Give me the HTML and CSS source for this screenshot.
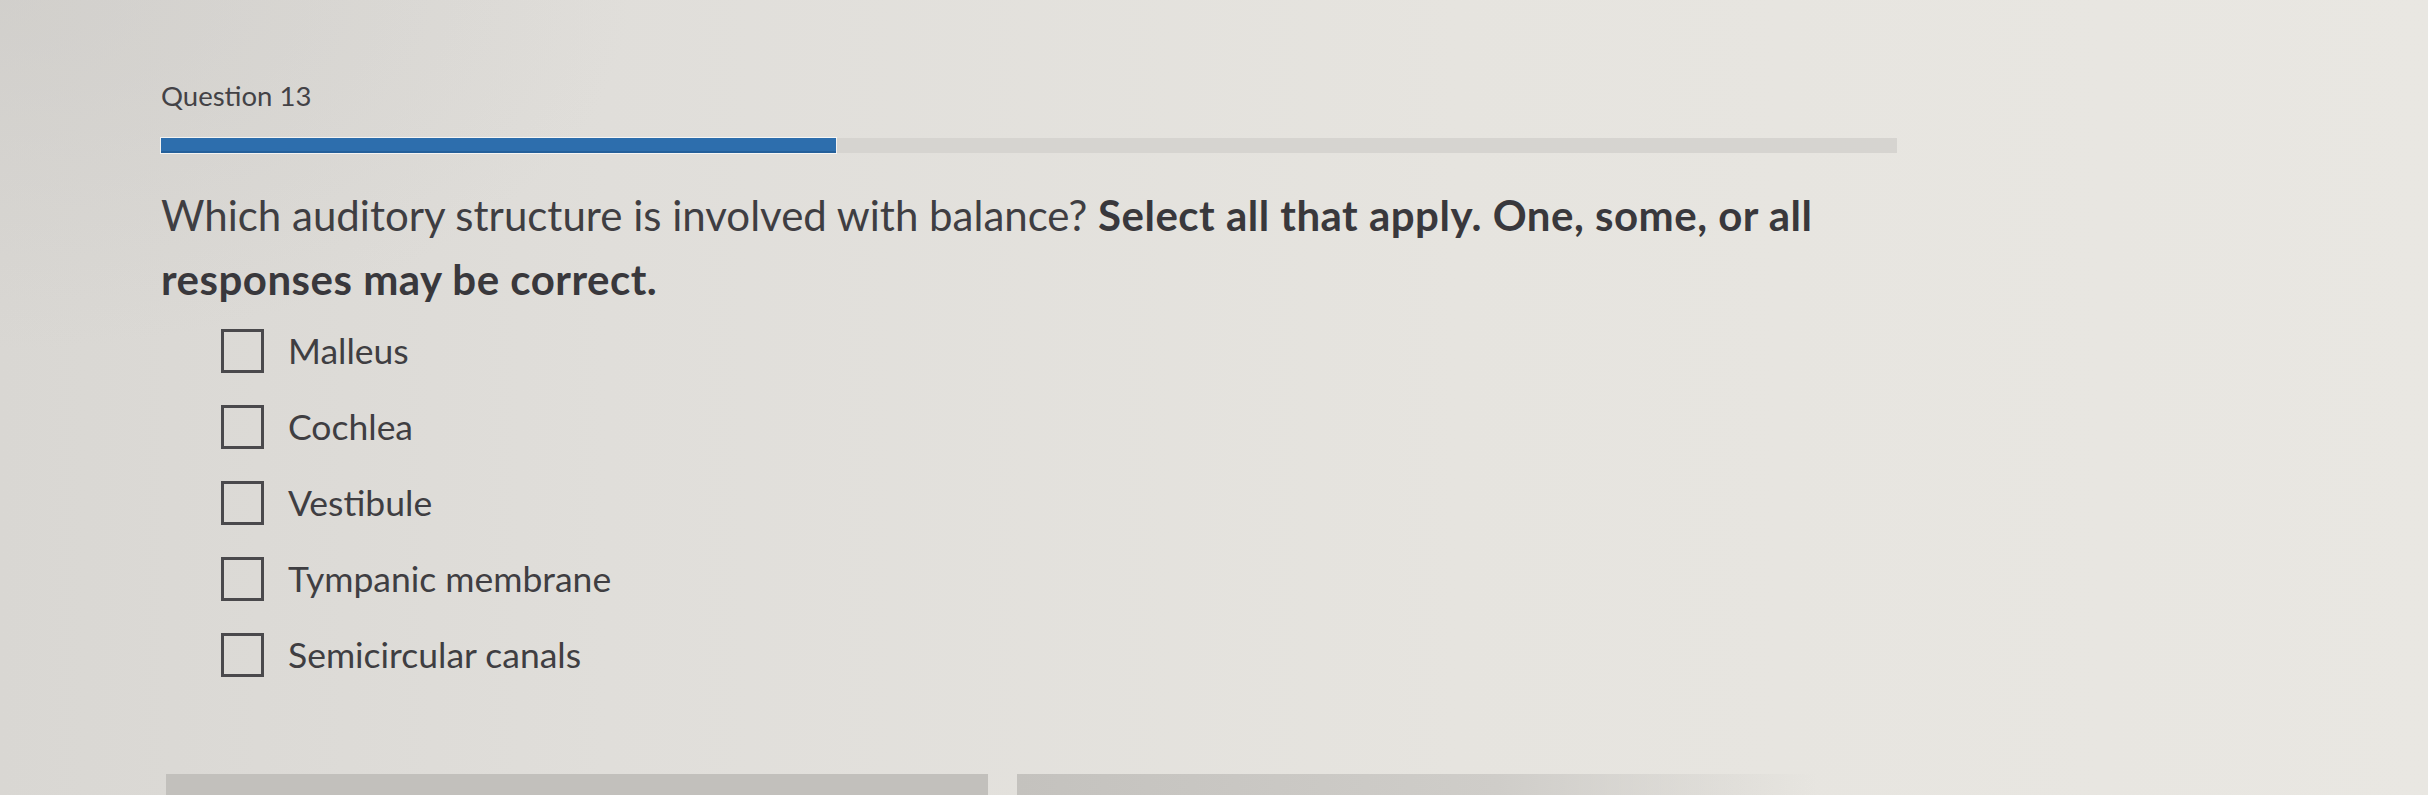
FILE: index.html
```html
<!DOCTYPE html>
<html lang="en">
<head>
<meta charset="utf-8">
<title>Question 13</title>
<link rel="stylesheet" href="styles.css">
</head>
<body>
<main class="page">
  <div class="q-label">Question 13</div>
  <div class="progress"><div class="progress-fill" style="width:675px"></div></div>
  <p class="prompt">Which auditory structure is involved with balance? <strong>Select all that apply. One, some, or all responses may be correct.</strong></p>
  <ul class="options">
    <li class="option"><span class="box"></span><span class="label">Malleus</span></li>
    <li class="option"><span class="box"></span><span class="label">Cochlea</span></li>
    <li class="option"><span class="box"></span><span class="label">Vestibule</span></li>
    <li class="option"><span class="box"></span><span class="label">Tympanic membrane</span></li>
    <li class="option"><span class="box"></span><span class="label">Semicircular canals</span></li>
  </ul>
  <div class="actions">
    <div class="btn btn-prev"></div>
    <div class="btn btn-next"></div>
  </div>
</main>
</body>
</html>
```

FILE: styles.css
```css
html, body {
  margin: 0;
  padding: 0;
  height: 100%;
  overflow: hidden;
}
body {
  background:
    radial-gradient(ellipse 900px 500px at 0 0, rgba(200,198,195,0.45), rgba(200,198,195,0) 70%),
    linear-gradient(90deg, #d9d7d3 0%, #e0deda 25%, #e6e4df 60%, #e9e7e2 100%);
  font-family: Lato, "Open Sans", sans-serif;
  color: #3b3a3e;
}
.page {
  padding: 79px 0 0 161px;
  box-sizing: border-box;
  height: 795px;
  display: flex;
  flex-direction: column;
}
.q-label {
  font-size: 27.5px;
  line-height: 34px;
  color: #434246;
}
.progress {
  margin-top: 25px;
  width: 1736px;
  height: 15px;
  background: #d6d4d0;
}
.progress-fill {
  height: 15px;
  background: #2d6ead;
  box-shadow: 0 0 0 1px rgba(255,255,255,0.7), inset 0 -2px 0 #25609a;
}
.prompt {
  margin: 31px 0 0;
  font-size: 42px;
  line-height: 63.5px;
  width: 1760px;
  color: #3f3e42;
}
.prompt strong {
  font-weight: 700;
  letter-spacing: 0.5px;
  color: #39383c;
}
.options {
  list-style: none;
  margin: 18px 0 0;
  padding: 0 0 0 60px;
  display: flex;
  flex-direction: column;
  gap: 32px;
}
.option {
  display: flex;
  align-items: center;
  gap: 24px;
  height: 44px;
}
.box {
  width: 43px;
  height: 44px;
  box-sizing: border-box;
  border: 3px solid #4a494c;
  flex: none;
}
.label {
  font-size: 35.5px;
  line-height: 44px;
  color: #3f3e42;
}
.actions {
  margin-top: auto;
  display: flex;
  gap: 29px;
  padding-left: 5px;
}
.btn {
  height: 21px;
  background: #c2c0bc;
}
.btn-prev {
  width: 822px;
}
.btn-next {
  width: 800px;
  background: linear-gradient(90deg, #c4c2be 0%, #cfcdc9 60%, rgba(220,218,214,0) 100%);
}
```
